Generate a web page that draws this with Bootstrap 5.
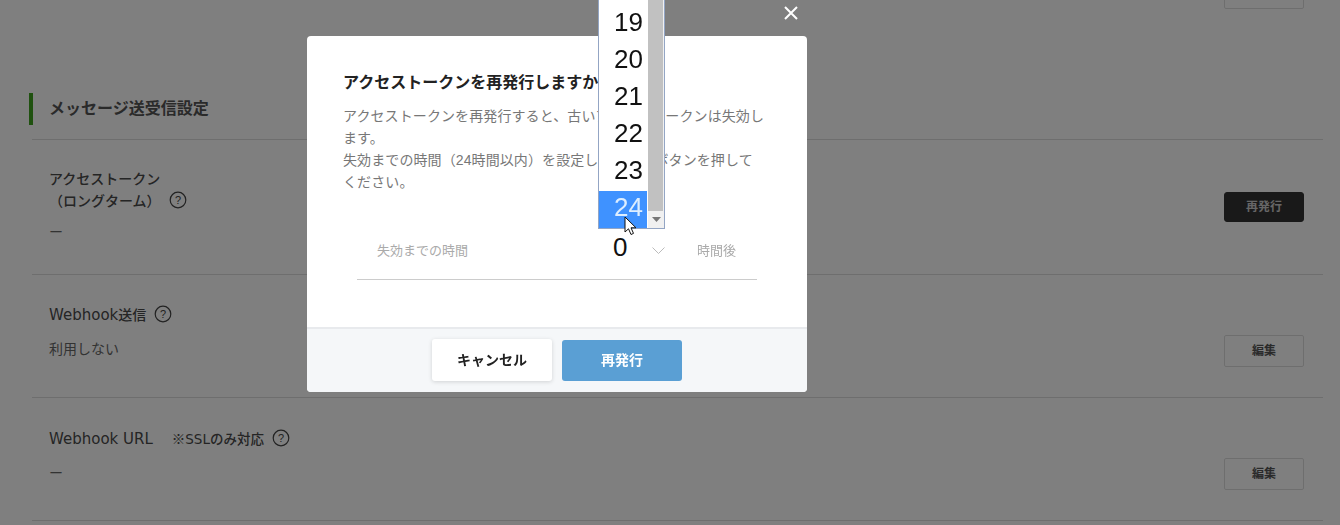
<!DOCTYPE html>
<html lang="ja">
<head>
<meta charset="utf-8">
<title>メッセージ送受信設定</title>
<link href="https://cdn.jsdelivr.net/npm/bootstrap@5.3.0/dist/css/bootstrap.min.css" rel="stylesheet">
<style>
html,body{height:525px;overflow:hidden}
body{background:#fff;font-family:"Liberation Sans","Noto Sans CJK JP",sans-serif;font-size:14px;color:#444;}
.pg{padding:0 17px 0 29px;margin-top:-23px}
.stub{height:116px;display:flex;justify-content:flex-end;align-items:flex-start;padding-right:19px}
.hd{border-left:4px solid #3fa31e;height:32px;padding-left:16px;font-size:16px;font-weight:700;line-height:32px;color:#555}
.rw{margin-left:3px;padding:0 19px 0 17px;border-top:1px solid #ddd;display:flex;justify-content:space-between;align-items:center}
.r1{margin-top:14px;height:135px}
.r2,.r3{height:123px}
.lbl{font-weight:500;line-height:22px;color:#4a4a4a}
.lat{font-family:"DejaVu Sans",sans-serif;font-size:15px;font-weight:400}
.val{line-height:22px;color:#666}
.r1 .val{margin-top:9px}
.r2 .val{margin-top:12px}
.r3 .val{margin-top:11px}
.r1 .rwtxt{margin-top:-4px}
.r2 .rwtxt{margin-top:-8px}
.r3 .rwtxt{margin-top:-6px}
.rbtn{width:80px;height:32px;padding:0;font-size:12px;font-weight:700;line-height:28px;border-radius:2px;background:#fff;border:1px solid #ddd;color:#555}
.r2 .rbtn,.r3 .rbtn{margin-top:30px}
.rbtn.dk{background:#333;border-color:#333;color:#ccc;border-radius:3px;height:30px}
.qm{display:inline-block;vertical-align:-3px;margin-left:8px}
.note{margin-left:19px;font-size:13.500px;font-weight:500}
.note b{font-family:"DejaVu Sans",sans-serif;font-weight:400;font-size:13.500px}
.dlg{width:500px;max-width:500px;margin:36px 0 0 307px}
.sheet{position:relative;height:356px;background:#fff;border:0;border-radius:4px}
.bd{padding:36px 35px 0 36px;height:291px;flex:none}
.ttl{font-size:16px;font-weight:700;line-height:22px;color:#222;margin-bottom:11px}
.msg{line-height:22px;color:#777;margin:0;letter-spacing:.1px;white-space:nowrap}
.frow{margin:30px 15px 0 14px;height:57px;display:flex;align-items:center;border-bottom:1px solid #ccc;color:#aaa;font-size:13px;padding:0 20px;white-space:nowrap}
.zero{margin-left:145px;font-size:26px;color:#111;width:39px;line-height:30px;margin-top:-8px}
.chev{margin-right:32px}
.ft{height:65px;background:#f5f7f9;border-top:2px solid #e8eaed;border-radius:0 0 4px 4px;display:flex;justify-content:center;gap:10px;padding-top:10px}
.b1,.b2{width:120px;font-size:14px;font-weight:700;border:0;border-radius:3px;padding:0}
.b1{height:42px;background:#fff;color:#222;box-shadow:0 1px 4px rgba(0,0,0,.15)}
.b2{height:41px;margin-top:1px;background:#5a9fd4;color:#fff}
.xbtn{position:absolute;left:476px;top:-31px;line-height:0}
.pop{position:absolute;left:291px;top:-36px;width:67px;height:229px;background:#fff;border:1px solid #93a5c4;border-top:0;display:flex;font-size:26px;color:#111}
.opts{width:49px;display:flex;flex-direction:column;justify-content:flex-end;margin:0;padding:0;list-style:none;overflow:hidden}
.opts li{height:37px;flex:none;line-height:33px;padding-left:15px}
.opts li.on{background:#3f92ff;color:#def}
.sbar{width:16px;margin-left:1px;background:#f0f0f0;display:flex;flex-direction:column}
.thumb{flex:1;background:#c1c1c1;margin-right:1px}
.arr{height:17px;display:flex;align-items:center;justify-content:center}
.cur{position:absolute;left:317px;top:180px;z-index:2;line-height:0}
</style>
</head>
<body>
<div class="pg">
  <div class="stub"><button class="btn rbtn" type="button">編集</button></div>
  <div class="hd">メッセージ送受信設定</div>
  <div class="rw r1">
    <div class="rwtxt">
      <div class="lbl">アクセストークン<br>（ロングターム）<svg class="qm" width="18" height="18" viewBox="0 0 18 18"><circle cx="9" cy="9" r="7.8" fill="none" stroke="#444" stroke-width="1.2"/><text x="9" y="13" text-anchor="middle" font-size="11" fill="#444" font-family="Liberation Sans">?</text></svg></div>
      <div class="val">ー</div>
    </div>
    <button class="btn rbtn dk" type="button">再発行</button>
  </div>
  <div class="rw r2">
    <div class="rwtxt">
      <div class="lbl"><span class="lat">Webhook</span>送信<svg class="qm" width="18" height="18" viewBox="0 0 18 18"><circle cx="9" cy="9" r="7.8" fill="none" stroke="#444" stroke-width="1.2"/><text x="9" y="13" text-anchor="middle" font-size="11" fill="#444" font-family="Liberation Sans">?</text></svg></div>
      <div class="val">利用しない</div>
    </div>
    <button class="btn rbtn" type="button">編集</button>
  </div>
  <div class="rw r3">
    <div class="rwtxt">
      <div class="lbl"><span class="lat">Webhook URL</span><span class="note">※<b>SSL</b>のみ対応</span><svg class="qm" width="18" height="18" viewBox="0 0 18 18"><circle cx="9" cy="9" r="7.8" fill="none" stroke="#444" stroke-width="1.2"/><text x="9" y="13" text-anchor="middle" font-size="11" fill="#444" font-family="Liberation Sans">?</text></svg></div>
      <div class="val">ー</div>
    </div>
    <button class="btn rbtn" type="button">編集</button>
  </div>
  <div class="rw"></div>
</div>

<div class="modal-backdrop show"></div>
<div class="modal d-block" tabindex="-1">
  <div class="modal-dialog dlg">
    <div class="modal-content sheet">
      <div class="xbtn"><svg width="16" height="16" viewBox="0 0 16 16"><path d="M2 2 14 14M14 2 2 14" stroke="#fff" stroke-width="2" fill="none"/></svg></div>
      <div class="bd">
        <div class="ttl">アクセストークンを再発行しますか？</div>
        <p class="msg">アクセストークンを再発行すると、古いアクセストークンは失効し<br>ます。<br>失効までの時間（24時間以内）を設定して再発行ボタンを押して<br>ください。</p>
        <div class="frow">
          <span>失効までの時間</span>
          <span class="zero">0</span>
          <svg class="chev" width="13" height="8" viewBox="0 0 13 8"><path d="M.5.5 6.500 6.500 12.500.5" stroke="#bbb" fill="none"/></svg>
          <span>時間後</span>
        </div>
      </div>
      <div class="ft">
        <button class="btn b1" type="button">キャンセル</button>
        <button class="btn b2" type="button">再発行</button>
      </div>
      <div class="pop">
        <ul class="opts"><li>19</li><li>20</li><li>21</li><li>22</li><li>23</li><li class="on">24</li></ul>
        <div class="sbar"><div class="thumb"></div><div class="arr"><svg width="9" height="5" viewBox="0 0 9 5"><path d="M0 0H9L4.500 5Z" fill="#777"/></svg></div></div>
      </div>
      <div class="cur"><svg width="14" height="20" viewBox="0 0 14 20"><path d="M1 1V16L4.500 12.800 7 18.500 9.500 17.400 7 11.800H12Z" fill="#fff" stroke="#111" stroke-width="1"/></svg></div>
    </div>
  </div>
</div>
<script src="https://cdn.jsdelivr.net/npm/bootstrap@5.3.0/dist/js/bootstrap.bundle.min.js"></script>
</body>
</html>
